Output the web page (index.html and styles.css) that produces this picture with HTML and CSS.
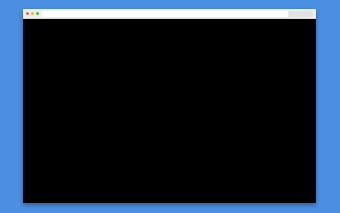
FILE: index.html
```html
<!DOCTYPE html>
<html lang="en">
<head>
    <meta charset="UTF-8">
    <meta name="viewport" content="width=device-width, initial-scale=1.0">
    <title>Browser Window</title>
    <link rel="stylesheet" href="styles.css">
</head>
<body>
    <div class="window">
        <div class="toolbar">
            <div class="dots">
                <span class="dot red"></span>
                <span class="dot yellow"></span>
                <span class="dot green"></span>
            </div>
            <div class="address"></div>
            <div class="tab"></div>
        </div>
        <div class="screen"></div>
    </div>
</body>
</html>
```

FILE: styles.css
```css
html, body{
    margin: 0;
    height: 100%;
}
body{
    background-color: #4a8fe2;
    padding: 9px 0 0 23px;
    box-sizing: border-box;
    font-family: "Liberation Sans", sans-serif;
}
.window{
    width: 293px;
    height: 194px;
    display: flex;
    flex-direction: column;
    box-shadow: 0 2px 4px rgba(0, 0, 0, 0.35);
}
.toolbar{
    height: 10px;
    background-color: #efefef;
    border-bottom: 1px solid #d8d8d8;
    box-sizing: border-box;
    display: flex;
    align-items: center;
    padding: 0 3px 0 3px;
}
.dots{
    display: flex;
    gap: 2px;
    width: 16px;
}
.dot{
    width: 3px;
    height: 3px;
    border-radius: 50%;
}
.red{ background-color: #ee5a55; }
.yellow{ background-color: #f2b431; }
.green{ background-color: #3fc23f; }
.address{
    flex: 1;
    height: 6px;
    background-color: #fff;
}
.tab{
    width: 24px;
    height: 6px;
    margin-left: 1px;
    background-color: #e3e3e3;
}
.screen{
    flex: 1;
    background-color: #000;
}
```
